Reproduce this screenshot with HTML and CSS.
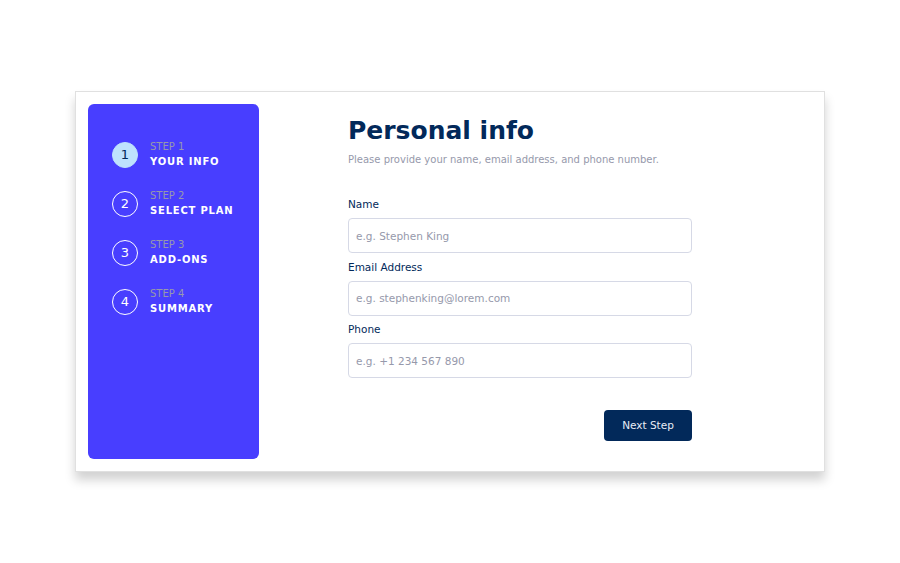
FILE: index.html
```html
<!DOCTYPE html>
<html lang="en">
<head>
<meta charset="utf-8">
<title>Personal info</title>
<link rel="stylesheet" href="styles.css">
</head>
<body>
<div class="page">
  <div class="card">
    <aside class="sidebar">
      <div class="step">
        <div class="num active">1</div>
        <div class="step-text"><div class="step-label">STEP 1</div><div class="step-name">YOUR INFO</div></div>
      </div>
      <div class="step">
        <div class="num">2</div>
        <div class="step-text"><div class="step-label">STEP 2</div><div class="step-name">SELECT PLAN</div></div>
      </div>
      <div class="step">
        <div class="num">3</div>
        <div class="step-text"><div class="step-label">STEP 3</div><div class="step-name">ADD-ONS</div></div>
      </div>
      <div class="step">
        <div class="num">4</div>
        <div class="step-text"><div class="step-label">STEP 4</div><div class="step-name">SUMMARY</div></div>
      </div>
    </aside>
    <main class="main">
      <h1 class="title">Personal info</h1>
      <p class="subtitle">Please provide your name, email address, and phone number.</p>
      <form class="form">
        <label class="label" for="name">Name</label>
        <input class="input" id="name" type="text" placeholder="e.g. Stephen King">
        <label class="label" for="email">Email Address</label>
        <input class="input" id="email" type="email" placeholder="e.g. stephenking@lorem.com">
        <label class="label" for="phone">Phone</label>
        <input class="input" id="phone" type="tel" placeholder="e.g. +1 234 567 890">
        <div class="actions"><button class="btn" type="button">Next Step</button></div>
      </form>
    </main>
  </div>
</div>
</body>
</html>
```
FILE: styles.css
```css
* { box-sizing: border-box; }
html, body { margin: 0; padding: 0; background: #fff; }
body { font-family: "DejaVu Sans", sans-serif; }
.page {
  width: 900px;
  height: 563px;
  display: flex;
  align-items: center;
  justify-content: center;
}
.card {
  width: 750px;
  height: 381px;
  background: #fff;
  border: 1px solid #e0e0e0;
  box-shadow: 0 8px 10px rgba(0,0,0,0.18);
  padding: 12px;
  display: flex;
}
.sidebar {
  width: 171px;
  height: 355px;
  background: #483EFF;
  border-radius: 6px;
  padding: 37px 0 0 24px;
  display: flex;
  flex-direction: column;
  gap: 22px;
}
.step { display: flex; align-items: center; gap: 12px; }
.num {
  width: 26px;
  height: 26px;
  border-radius: 50%;
  border: 1px solid #fff;
  color: #fff;
  font-size: 13px;
  display: flex;
  align-items: center;
  justify-content: center;
}
.num.active { background: #BEE2FD; border-color: #BEE2FD; color: #02295A; }
.step-text { display: flex; flex-direction: column; gap: 3px; }
.step-label { font-size: 10px; color: #9699AB; line-height: 12px; }
.step-name { font-size: 10px; font-weight: bold; color: #fff; letter-spacing: 0.8px; line-height: 12px; }
.main { padding: 11px 0 0 89px; }
.title { margin: 0; font-size: 25px; font-weight: bold; color: #02295A; line-height: 32px; }
.subtitle { margin: 6px 0 0; font-size: 10px; color: #9699AB; line-height: 13px; }
.form { display: flex; flex-direction: column; width: 344px; margin-top: 32px; }
.label { font-size: 10.5px; color: #02295A; line-height: 12px; margin-bottom: 8px; }
.input {
  width: 344px;
  height: 35px;
  border: 1px solid #d6d9e6;
  border-radius: 4px;
  padding: 0 7px;
  font-family: "DejaVu Sans", sans-serif;
  font-size: 10.5px;
  color: #02295A;
  margin-bottom: 7.5px;
}
.input::placeholder { color: #9699AB; }
.actions { display: flex; justify-content: flex-end; margin-top: 24px; }
.btn {
  width: 88px;
  height: 31px;
  background: #02295A;
  color: #e8ecf5;
  border: none;
  border-radius: 4px;
  font-family: "DejaVu Sans", sans-serif;
  font-size: 10.5px;
}
```
